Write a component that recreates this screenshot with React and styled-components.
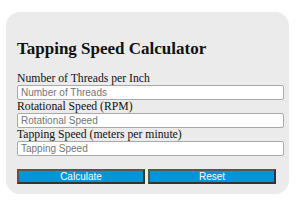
import React from 'react'
import styled, { createGlobalStyle } from 'styled-components'

const GlobalStyle = createGlobalStyle`
body {
  margin: 0;
  background: #ffffff;
  font-family: "Liberation Serif", "Times New Roman", serif;
}
`

const Page = styled.div`
padding: 12px 11px 15px 6px;
`

const Card = styled.div`
background-color: #ebebeb;
border-radius: 14px;
width: 283px;
box-sizing: border-box;
padding: 10px 5px 10px 11px;
`

const Title = styled.h2`
font-size: 17px;
font-weight: bold;
color: #111;
margin: 16px 0 13px 0;
line-height: 21px;
`

const Field = styled.div`
display: flex;
flex-direction: column;
`

const Label = styled.label`
font-size: 11.7px;
line-height: 13px;
color: #111;
`

const Input = styled.input`
box-sizing: border-box;
width: 100%;
height: 15px;
margin: 0;
padding: 0 3px;
border: 1px solid #a9a9a9;
border-radius: 2px;
background: #fff;
font-family: "Liberation Sans", Arial, sans-serif;
font-size: 10px;
::placeholder {
  color: #8a8a8a;
}
`

const Buttons = styled.div`
display: flex;
gap: 3px;
margin-top: 13px;
`

const Button = styled.button`
box-sizing: border-box;
width: 128px;
height: 15px;
padding: 0;
background-color: #0094d9;
border: 2px solid #333;
border-top-color: #555;
border-left-color: #555;
color: #fff;
font-family: "Liberation Sans", Arial, sans-serif;
font-size: 10px;
line-height: 11px;
:hover {
  cursor: pointer;
}
`

const fields = [
  { label: 'Number of Threads per Inch', placeholder: 'Number of Threads' },
  { label: 'Rotational Speed (RPM)', placeholder: 'Rotational Speed' },
  { label: 'Tapping Speed (meters per minute)', placeholder: 'Tapping Speed' },
]

function App() {
  return (
    <Page>
      <GlobalStyle />
      <Card>
        <Title>Tapping Speed Calculator</Title>
        {fields.map(f => (
          <Field key={f.label}>
            <Label>{f.label}</Label>
            <Input type="text" placeholder={f.placeholder} />
          </Field>
        ))}
        <Buttons>
          <Button>Calculate</Button>
          <Button>Reset</Button>
        </Buttons>
      </Card>
    </Page>
  )
}

export default App
